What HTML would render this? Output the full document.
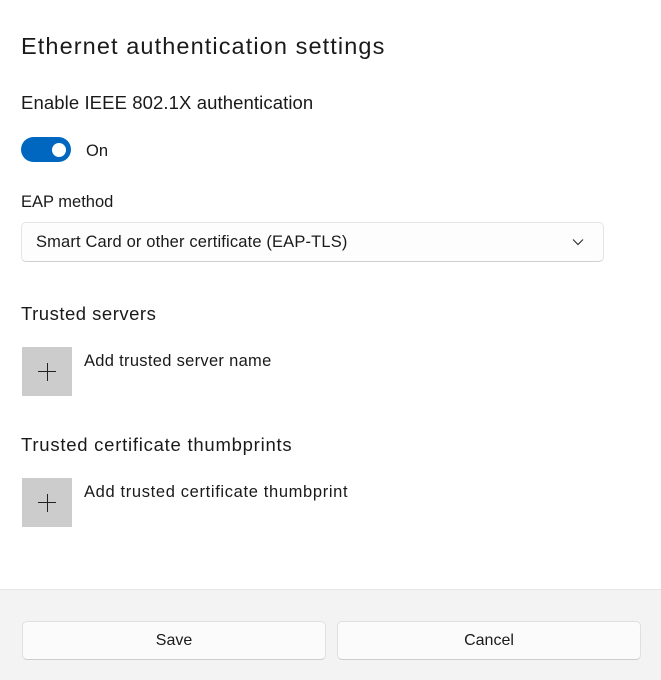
<!DOCTYPE html>
<html><head><style>
body{margin:0;width:661px;height:679px;background:#fff;font-family:"Liberation Sans",sans-serif;color:#1a1a1a;position:relative;overflow:hidden}
.a{position:absolute;white-space:nowrap}
.t{font-size:23.5px;left:21px;top:33px;letter-spacing:1.1px}
.h{font-size:18.5px;left:21px}
.b{font-size:16.5px}
.box{position:absolute;left:22px;width:50px;height:49px;background:#cccccc}
.box:before{content:"";position:absolute;left:16px;top:24px;width:18px;height:1.3px;background:#222}
.box:after{content:"";position:absolute;left:24.5px;top:16px;width:1.3px;height:18px;background:#222}
.btn{position:absolute;top:621px;height:37px;background:#fbfbfb;border:1px solid #e0e0e0;border-bottom-color:#ccc;border-radius:5px;font-size:16px;text-align:center;line-height:37px}
</style></head><body>
<div class="a t">Ethernet authentication settings</div>
<div class="a h" style="top:92px;letter-spacing:0.1px">Enable IEEE 802.1X authentication</div>
<div class="a" style="left:21px;top:137px;width:50px;height:25px;border-radius:13px;background:#0067c0"></div>
<div class="a" style="left:52px;top:143px;width:14px;height:14px;border-radius:7px;background:#fff"></div>
<div class="a b" style="left:86px;top:142px">On</div>
<div class="a b" style="left:21px;top:193px">EAP method</div>
<div class="a" style="left:21px;top:222px;width:581px;height:38px;border:1px solid #e5e5e5;border-bottom-color:#d0d0d0;border-radius:5px;background:#fdfdfd"></div>
<div class="a b" style="left:36px;top:233px;letter-spacing:0.15px">Smart Card or other certificate (EAP-TLS)</div>
<svg class="a" style="left:572px;top:238px" width="12" height="8"><path d="M1 1.5L6 6.5L11 1.5" fill="none" stroke="#333" stroke-width="1.2"/></svg>
<div class="a h" style="top:303px;letter-spacing:0.5px">Trusted servers</div>
<div class="box" style="top:347px"></div>
<div class="a b" style="left:84px;top:352px;letter-spacing:0.3px">Add trusted server name</div>
<div class="a h" style="top:434px;letter-spacing:0.75px">Trusted certificate thumbprints</div>
<div class="box" style="top:478px"></div>
<div class="a b" style="left:84px;top:483px;letter-spacing:0.65px">Add trusted certificate thumbprint</div>
<div class="a" style="left:0;top:589px;width:661px;height:90px;background:#f3f3f3;border-top:1px solid #e5e5e5"></div>
<div class="btn" style="left:22px;width:302px">Save</div>
<div class="btn" style="left:337px;width:302px">Cancel</div>
</body></html>
